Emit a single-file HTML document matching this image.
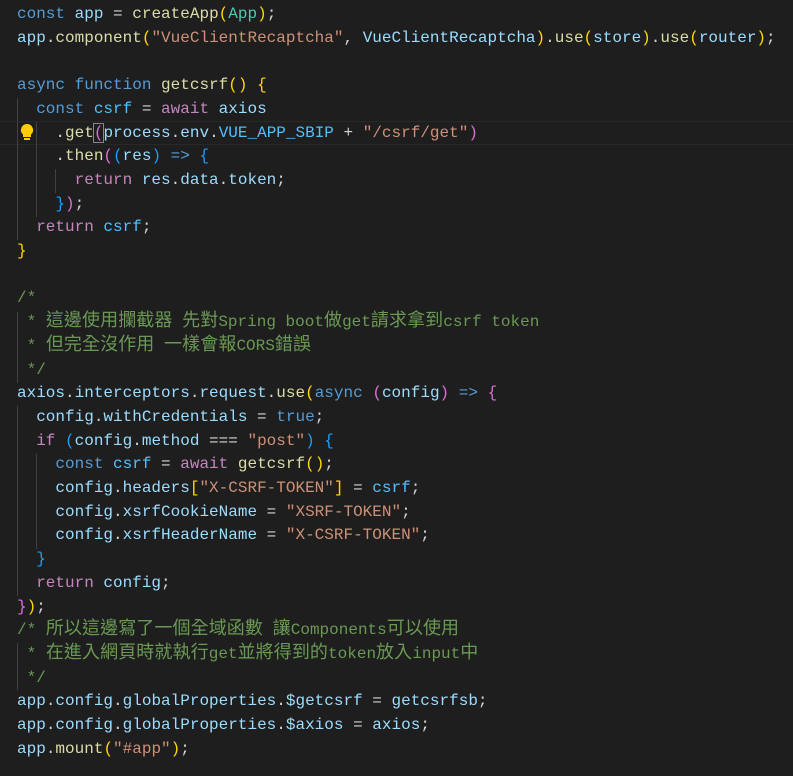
<!DOCTYPE html><html><head><style>
body{margin:0;background:#1e1e1e;width:793px;height:776px;overflow:hidden;position:relative}
pre{margin:0;position:absolute;left:17px;top:3px;font:16px/23.7px "Liberation Mono","Noto Sans CJK TC",monospace;color:#d4d4d4}
.k{color:#569cd6}.v{color:#9cdcfe}.f{color:#dcdcaa}.s{color:#ce9178}.c{color:#c586c0}.g{color:#6a9955}.t{color:#4ec9b0}.n{color:#4fc1ff}
.y{color:#ffd700}.p{color:#da70d6}.b{color:#179fff}
.z{font-size:18px;line-height:1;letter-spacing:.1px}
.gd{position:absolute;width:1px;background:#404040}
.hl{position:absolute;left:0;right:0;top:121px;height:22px;border-top:1px solid #282828;border-bottom:1px solid #282828}
</style></head><body>
<div class="hl"></div>
<div class="gd" style="left:17px;top:98px;height:142px"></div>
<div class="gd" style="left:36px;top:122px;height:95px"></div>
<div class="gd" style="left:55px;top:169px;height:24px"></div>
<div class="gd" style="left:17px;top:312px;height:71px"></div>
<div class="gd" style="left:17px;top:406px;height:190px"></div>
<div class="gd" style="left:36px;top:454px;height:95px"></div>
<div class="gd" style="left:17px;top:643px;height:47px"></div>
<svg style="position:absolute;left:20px;top:123px" width="14" height="18" viewBox="0 0 14 18"><path d="M7 1a6 6 0 0 0-4 10.5V14h8v-2.5A6 6 0 0 0 7 1z" fill="#ffcc00"/><rect x="4" y="15" width="6" height="2" fill="#ffcc00"/></svg>
<pre><span class="k">const</span> <span class="v">app</span> = <span class="f">createApp</span><span class="y">(</span><span class="t">App</span><span class="y">)</span>;
<span class="v">app</span>.<span class="f">component</span><span class="y">(</span><span class="s">"VueClientRecaptcha"</span>, <span class="v">VueClientRecaptcha</span><span class="y">)</span>.<span class="f">use</span><span class="y">(</span><span class="v">store</span><span class="y">)</span>.<span class="f">use</span><span class="y">(</span><span class="v">router</span><span class="y">)</span>;

<span class="k">async</span> <span class="k">function</span> <span class="f">getcsrf</span><span class="y">()</span> <span class="y">{</span>
  <span class="k">const</span> <span class="n">csrf</span> = <span class="c">await</span> <span class="v">axios</span>
    .<span class="f">get</span><span class="p" style="outline:1px solid #888">(</span><span class="v">process</span>.<span class="v">env</span>.<span class="n">VUE_APP_SBIP</span> + <span class="s">"/csrf/get"</span><span class="p">)</span>
    .<span class="f">then</span><span class="p">(</span><span class="b">(</span><span class="v">res</span><span class="b">)</span> <span class="k">=&gt;</span> <span class="b">{</span>
      <span class="c">return</span> <span class="v">res</span>.<span class="v">data</span>.<span class="v">token</span>;
    <span class="b">}</span><span class="p">)</span>;
  <span class="c">return</span> <span class="n">csrf</span>;
<span class="y">}</span>

<span class="g">/*
 * <span class="z">這邊使用攔截器</span> <span class="z">先對</span>Spring boot<span class="z">做</span>get<span class="z">請求拿到</span>csrf token
 * <span class="z">但完全沒作用</span> <span class="z">一樣會報</span>CORS<span class="z">錯誤</span>
 */</span>
<span class="v">axios</span>.<span class="v">interceptors</span>.<span class="v">request</span>.<span class="f">use</span><span class="y">(</span><span class="k">async</span> <span class="p">(</span><span class="v">config</span><span class="p">)</span> <span class="k">=&gt;</span> <span class="p">{</span>
  <span class="v">config</span>.<span class="v">withCredentials</span> = <span class="k">true</span>;
  <span class="c">if</span> <span class="b">(</span><span class="v">config</span>.<span class="v">method</span> === <span class="s">"post"</span><span class="b">)</span> <span class="b">{</span>
    <span class="k">const</span> <span class="n">csrf</span> = <span class="c">await</span> <span class="f">getcsrf</span><span class="y">()</span>;
    <span class="v">config</span>.<span class="v">headers</span><span class="y">[</span><span class="s">"X-CSRF-TOKEN"</span><span class="y">]</span> = <span class="n">csrf</span>;
    <span class="v">config</span>.<span class="v">xsrfCookieName</span> = <span class="s">"XSRF-TOKEN"</span>;
    <span class="v">config</span>.<span class="v">xsrfHeaderName</span> = <span class="s">"X-CSRF-TOKEN"</span>;
  <span class="b">}</span>
  <span class="c">return</span> <span class="v">config</span>;
<span class="p">}</span><span class="y">)</span>;
<span class="g">/* <span class="z">所以這邊寫了一個全域函數</span> <span class="z">讓</span>Components<span class="z">可以使用</span>
 * <span class="z">在進入網頁時就執行</span>get<span class="z">並將得到的</span>token<span class="z">放入</span>input<span class="z">中</span>
 */</span>
<span class="v">app</span>.<span class="v">config</span>.<span class="v">globalProperties</span>.<span class="v">$getcsrf</span> = <span class="v">getcsrfsb</span>;
<span class="v">app</span>.<span class="v">config</span>.<span class="v">globalProperties</span>.<span class="v">$axios</span> = <span class="v">axios</span>;
<span class="v">app</span>.<span class="f">mount</span><span class="y">(</span><span class="s">"#app"</span><span class="y">)</span>;
</pre></body></html>
